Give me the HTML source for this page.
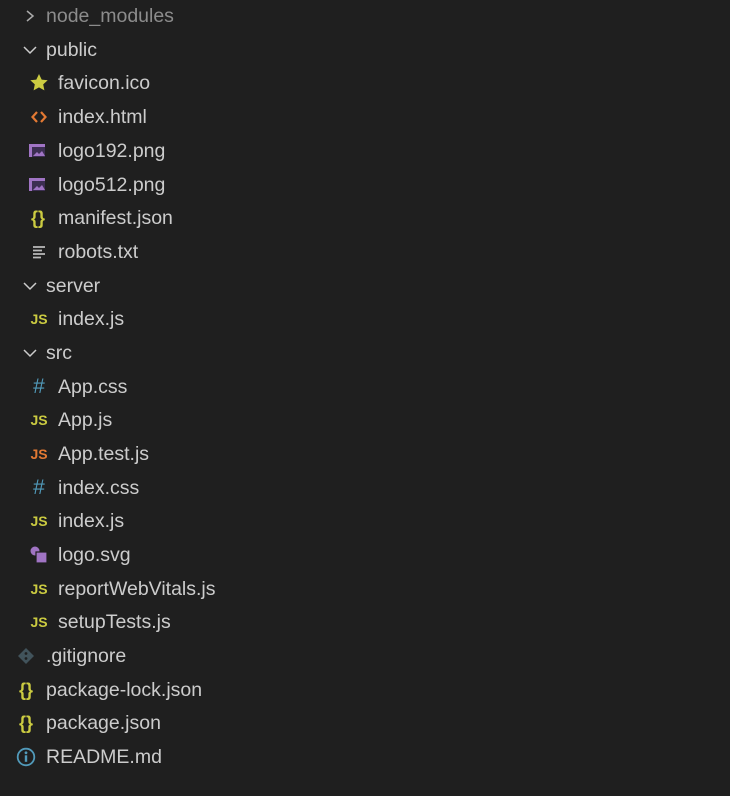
<!DOCTYPE html>
<html><head><style>
html,body{margin:0;padding:0;background:#1f1f1f;width:730px;height:796px;overflow:hidden}
.r{position:absolute;height:34px;line-height:34px;font-family:"Segoe UI","Liberation Sans",sans-serif;font-size:19.5px;color:#cccccc;white-space:nowrap}
.i{position:absolute;top:0;height:34px;display:flex;align-items:center;justify-content:center;width:20px;font-weight:bold;font-size:14px}
.js{color:#cbcb41;font-size:14px}
.jsr{color:#e37933;font-size:14px}
.br{color:#cbcb41;font-size:18px}
.hash{color:#519aba;font-size:21px;font-weight:normal}
</style></head><body>
<div class="r" style="top:-1px;left:46px;color:#8c8c8c"><span class="i" style="left:-26px"><svg width="12" height="14"><path d="M3 2l6 5-6 5" stroke="#aaa" stroke-width="1.5" fill="none"/></svg></span>node_modules</div>
<div class="r" style="top:33px;left:46px"><span class="i" style="left:-26px"><svg width="14" height="12"><path d="M1 3l6 6 6-6" stroke="#ccc" stroke-width="1.5" fill="none"/></svg></span>public</div>
<div class="r" style="top:66px;left:58px"><span class="i" style="left:-29px"><svg width="20" height="20"><path d="M10 1l2.7 5.6 6 .7-4.5 4.1 1.2 6L10 14.4l-5.4 3 1.2-6L1.3 7.3l6-.7z" fill="#cbcb41"/></svg></span>favicon.ico</div>
<div class="r" style="top:100px;left:58px"><span class="i" style="left:-29px"><svg width="18" height="16"><path d="M7 3L2.5 8 7 13M11 3l4.5 5-4.5 5" stroke="#e37933" stroke-width="2.2" fill="none"/></svg></span>index.html</div>
<div class="r" style="top:134px;left:58px"><span class="i" style="left:-30px"><svg width="20" height="18"><rect x="1" y="2" width="16" height="13" fill="#a074c4"/><rect x="4" y="5" width="13" height="10" fill="#3c2e52"/><path d="M5 14l4-4 2 2 3-3 3 5z" fill="#a074c4"/></svg></span>logo192.png</div>
<div class="r" style="top:168px;left:58px"><span class="i" style="left:-30px"><svg width="20" height="18"><rect x="1" y="2" width="16" height="13" fill="#a074c4"/><rect x="4" y="5" width="13" height="10" fill="#3c2e52"/><path d="M5 14l4-4 2 2 3-3 3 5z" fill="#a074c4"/></svg></span>logo512.png</div>
<div class="r" style="top:201px;left:58px"><span class="i br" style="left:-30px">{}</span>manifest.json</div>
<div class="r" style="top:235px;left:58px"><span class="i" style="left:-29px"><svg width="16" height="16"><path d="M2 3h12M2 6.5h9M2 10h12M2 13.5h8" stroke="#bbb" stroke-width="1.8"/></svg></span>robots.txt</div>
<div class="r" style="top:269px;left:46px"><span class="i" style="left:-26px"><svg width="14" height="12"><path d="M1 3l6 6 6-6" stroke="#ccc" stroke-width="1.5" fill="none"/></svg></span>server</div>
<div class="r" style="top:302px;left:58px"><span class="i js" style="left:-29px">JS</span>index.js</div>
<div class="r" style="top:336px;left:46px"><span class="i" style="left:-26px"><svg width="14" height="12"><path d="M1 3l6 6 6-6" stroke="#ccc" stroke-width="1.5" fill="none"/></svg></span>src</div>
<div class="r" style="top:370px;left:58px"><span class="i hash" style="left:-29px">#</span>App.css</div>
<div class="r" style="top:403px;left:58px"><span class="i js" style="left:-29px">JS</span>App.js</div>
<div class="r" style="top:437px;left:58px"><span class="i jsr" style="left:-29px">JS</span>App.test.js</div>
<div class="r" style="top:471px;left:58px"><span class="i hash" style="left:-29px">#</span>index.css</div>
<div class="r" style="top:504px;left:58px"><span class="i js" style="left:-29px">JS</span>index.js</div>
<div class="r" style="top:538px;left:58px"><span class="i" style="left:-29px"><svg width="20" height="20"><circle cx="6" cy="6" r="4.5" fill="#a074c4"/><rect x="7" y="7" width="11" height="11" fill="#a074c4" stroke="#1f1f1f" stroke-width="1.2"/></svg></span>logo.svg</div>
<div class="r" style="top:572px;left:58px"><span class="i js" style="left:-29px">JS</span>reportWebVitals.js</div>
<div class="r" style="top:605px;left:58px"><span class="i js" style="left:-29px">JS</span>setupTests.js</div>
<div class="r" style="top:639px;left:46px"><span class="i" style="left:-30px"><svg width="18" height="18"><path d="M9 1l8 8-8 8-8-8z" fill="#41535b"/><circle cx="9" cy="6.5" r="1.4" fill="#1f1f1f"/><circle cx="9" cy="11.5" r="1.4" fill="#1f1f1f"/></svg></span>.gitignore</div>
<div class="r" style="top:673px;left:46px"><span class="i br" style="left:-30px">{}</span>package-lock.json</div>
<div class="r" style="top:706px;left:46px"><span class="i br" style="left:-30px">{}</span>package.json</div>
<div class="r" style="top:740px;left:46px"><span class="i" style="left:-30px"><svg width="20" height="20"><circle cx="10" cy="10" r="8.3" fill="none" stroke="#519aba" stroke-width="1.8"/><circle cx="10" cy="5.8" r="1.4" fill="#519aba"/><rect x="8.8" y="8.3" width="2.4" height="6.5" fill="#519aba"/></svg></span>README.md</div>
</body></html>
